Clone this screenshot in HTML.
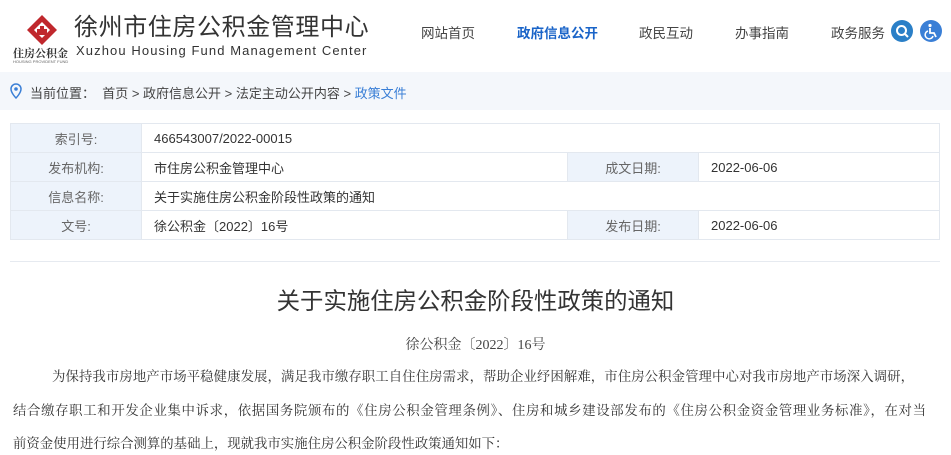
<!DOCTYPE html>
<html><head><meta charset="utf-8"><style>
*{margin:0;padding:0;box-sizing:border-box}
body{width:951px;height:455px;overflow:hidden;background:#fff;font-family:"Liberation Sans","Noto Sans CJK SC",sans-serif;color:#333;position:relative}
.abs{position:absolute}
.nav{font-size:13.5px;color:#444;top:22px}
.bc{top:72px;left:0;width:951px;height:38px;background:#f4f7fb;font-size:13px;color:#444}
table{position:absolute;left:10px;top:123px;width:930px;border-collapse:collapse;font-size:13px}
td{height:29px;border:1px solid #e3e8ef;padding:0 12px;color:#333}
td.l{background:#edf3fb;text-align:center;color:#666;width:131px}
.ln{font-family:"Liberation Serif","Noto Serif CJK SC",serif;font-size:13.4px;line-height:20px;color:#333;text-align:justify;text-align-last:justify;white-space:nowrap}
</style></head><body>
<svg class="abs" style="left:26px;top:14px" width="32" height="32" viewBox="0 0 32 32"><path d="M16 1 L31 16 L16 31 L1 16 Z" fill="#c0282d"/><path d="M16 8 L24 16 L16 24 L8 16 Z" fill="#fff"/><path d="M11 15 h10 v6 h-10z M14 12 h4 v4 h-4z" fill="#c0282d"/></svg>
<div class="abs" style="left:13px;top:45px;font-size:11px;font-weight:bold;color:#333;font-family:'Noto Serif CJK SC',serif">住房公积金</div>
<div class="abs" style="left:13px;top:59px;font-size:4px;color:#666">HOUSING PROVIDENT FUND</div>
<div class="abs" style="left:74px;top:12px;font-size:24px;color:#333;letter-spacing:0.6px;line-height:32px">徐州市住房公积金管理中心</div>
<div class="abs" style="left:76px;top:43px;font-size:13px;color:#333;letter-spacing:1.1px">Xuzhou Housing Fund Management Center</div>
<div class="abs nav" style="left:421px">网站首页</div>
<div class="abs nav" style="left:517px;color:#1a64c8;font-weight:bold">政府信息公开</div>
<div class="abs nav" style="left:639px">政民互动</div>
<div class="abs nav" style="left:735px">办事指南</div>
<div class="abs nav" style="left:831px">政务服务</div>
<svg class="abs" style="left:891px;top:20px" width="22" height="22"><circle cx="11" cy="11" r="11" fill="#2a7fc7"/><circle cx="10.5" cy="10.5" r="4.5" stroke="#fff" stroke-width="2" fill="none"/><path d="M14 14 l3 3" stroke="#fff" stroke-width="2"/></svg>
<svg class="abs" style="left:920px;top:20px" width="22" height="22"><circle cx="11" cy="11" r="11" fill="#3a7fd6"/><circle cx="10" cy="5.5" r="1.6" fill="#fff"/><path d="M10 8 v5 h4 l2 4" stroke="#fff" stroke-width="1.8" fill="none"/><path d="M8 11 a4 4 0 1 0 5 5" stroke="#fff" stroke-width="1.5" fill="none"/></svg>
<div class="abs bc">
<svg class="abs" style="left:10px;top:11px" width="12" height="16" viewBox="0 0 12 16"><path d="M6 1 a5 5 0 0 1 5 5 c0 4 -5 9 -5 9 c0 0 -5 -5 -5 -9 a5 5 0 0 1 5 -5z" fill="none" stroke="#3a7fd6" stroke-width="1.5"/><circle cx="6" cy="6" r="1.8" fill="#3a7fd6"/></svg>
<div class="abs" style="left:30px;top:11px">当前位置： &nbsp;首页 &gt; 政府信息公开 &gt; 法定主动公开内容 &gt; <span style="color:#3a7fd6">政策文件</span></div>
</div>
<table>
<tr><td class="l">索引号:</td><td colspan="3">466543007/2022-00015</td></tr>
<tr><td class="l">发布机构:</td><td style="width:426px">市住房公积金管理中心</td><td class="l" style="width:130px">成文日期:</td><td>2022-06-06</td></tr>
<tr><td class="l">信息名称:</td><td colspan="3">关于实施住房公积金阶段性政策的通知</td></tr>
<tr><td class="l">文号:</td><td>徐公积金〔2022〕16号</td><td class="l">发布日期:</td><td>2022-06-06</td></tr>
</table>
<div class="abs" style="left:10px;top:261px;width:930px;height:1px;background:#e6eaf0"></div>
<div class="abs" style="left:0;width:951px;top:282px;text-align:center;font-size:23.4px;color:#333">关于实施住房公积金阶段性政策的通知</div>
<div class="abs" style="left:0;width:951px;top:334px;text-align:center;font-size:14px;color:#444;font-family:'Liberation Serif','Noto Serif CJK SC',serif">徐公积金〔2022〕16号</div>
<div class="abs ln" style="left:52px;width:862px;top:367px">为保持我市房地产市场平稳健康发展，满足我市缴存职工自住住房需求，帮助企业纾困解难，市住房公积金管理中心对我市房地产市场深入调研，</div>
<div class="abs ln" style="left:13px;width:913px;top:401px">结合缴存职工和开发企业集中诉求，依据国务院颁布的《住房公积金管理条例》、住房和城乡建设部发布的《住房公积金资金管理业务标准》，在对当</div>
<div class="abs ln" style="left:13px;top:434px;text-align-last:left">前资金使用进行综合测算的基础上，现就我市实施住房公积金阶段性政策通知如下：</div>
</body></html>
